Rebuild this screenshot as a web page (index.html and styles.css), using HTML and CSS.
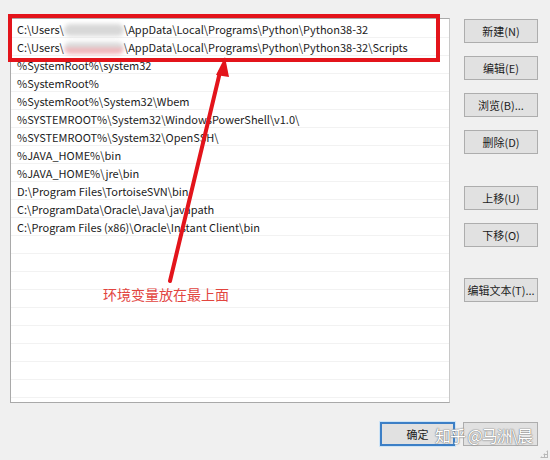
FILE: index.html
```html
<!DOCTYPE html>
<html>
<head>
<meta charset="utf-8">
<link rel="stylesheet" href="styles.css">
</head>
<body>
<div class="dialog">
  <div class="main">
    <div class="list">
      <div class="row">C:\Users\<span class="blur"></span>\AppData\Local\Programs\Python\Python38-32</div>
      <div class="row">C:\Users\<span class="blur pink"></span>\AppData\Local\Programs\Python\Python38-32\Scripts</div>
      <div class="row">%SystemRoot%\system32</div>
      <div class="row">%SystemRoot%</div>
      <div class="row">%SystemRoot%\System32\Wbem</div>
      <div class="row">%SYSTEMROOT%\System32\WindowsPowerShell\v1.0\</div>
      <div class="row">%SYSTEMROOT%\System32\OpenSSH\</div>
      <div class="row">%JAVA_HOME%\bin</div>
      <div class="row">%JAVA_HOME%\jre\bin</div>
      <div class="row">D:\Program Files\TortoiseSVN\bin</div>
      <div class="row">C:\ProgramData\Oracle\Java\javapath</div>
      <div class="row">C:\Program Files (x86)\Oracle\Instant Client\bin</div>
    </div>
    <div class="side">
      <button class="btn">新建(N)</button>
      <button class="btn">编辑(E)</button>
      <button class="btn">浏览(B)...</button>
      <button class="btn">删除(D)</button>
      <button class="btn sep">上移(U)</button>
      <button class="btn">下移(O)</button>
      <button class="btn sep2">编辑文本(T)...</button>
    </div>
  </div>
  <div class="bottom">
    <button class="btn ok">确定</button>
    <button class="btn cancel">取消</button>
  </div>
</div>
<div class="redbox"></div>
<svg class="arrow" width="550" height="460" viewBox="0 0 550 460">
  <line x1="170" y1="281" x2="220" y2="72" stroke="#e3141b" stroke-width="4" stroke-linecap="round"/>
  <polygon points="225,57 216,75 229,77" fill="#e3141b"/>
</svg>
<div class="note">环境变量放在最上面</div>
<div class="watermark">知乎 @马洲\晨</div>
<div class="grip"></div>
</body>
</html>
```
FILE: styles.css
```css
html, body {
  margin: 0;
  padding: 0;
}
body {
  width: 550px;
  height: 460px;
  background: #f0f0f0;
  font-family: "Noto Sans CJK SC", "Liberation Sans", sans-serif;
  font-size: 11px;
  color: #1c1c1c;
  position: relative;
  overflow: hidden;
}
.dialog {
  padding: 18px 12px 0 10px;
}
.main {
  display: grid;
  grid-template-columns: 440px 74px;
  column-gap: 14px;
}
.list {
  height: 382px;
  border: 1px solid #a9a9a9;
  border-right-color: #c8c8c8;
  background-color: #fff;
  background-image: repeating-linear-gradient(to bottom, transparent 0, transparent 17px, #f2f2f2 17px, #f2f2f2 18px);
  background-position: 0 1px;
  padding-top: 1px;
  box-sizing: content-box;
}
.row {
  height: 18px;
  line-height: 18px;
  padding-left: 6px;
  white-space: nowrap;
}
.blur {
  display: inline-block;
  width: 60px;
  height: 12px;
  vertical-align: -2px;
  background: #d8d8d8;
  border-radius: 6px;
  filter: blur(2px);
}
.blur.pink {
  background: linear-gradient(to bottom, #dcdcdc 0, #dcdcdc 50%, #f0b4b8 50%, #f0b4b8 100%);
}
.side {
  display: flex;
  flex-direction: column;
  padding-top: 1px;
  gap: 13px;
}
.btn {
  width: 74px;
  height: 24px;
  margin: 0;
  padding: 0;
  background: #e1e1e1;
  border: 1px solid #adadad;
  font-family: "Noto Sans CJK SC", "Liberation Sans", sans-serif;
  font-size: 11px;
  color: #1c1c1c;
  white-space: nowrap;
}
.side .sep { margin-top: 19px; }
.side .sep2 { margin-top: 18px; }
.bottom {
  display: flex;
  justify-content: flex-end;
  gap: 8px;
  margin-top: 19px;
}
.bottom .btn {
  width: 75px;
  height: 24px;
}
.ok {
  border: 2px solid #3c7fc6;
  box-shadow: 0 0 0 1px #cde4f7;
}
.cancel { color: #e1e1e1; }
.redbox {
  position: absolute;
  left: 8px;
  top: 14px;
  width: 424px;
  height: 40px;
  border: 4px solid #e3141b;
}
.arrow {
  position: absolute;
  left: 0;
  top: 0;
}
.note {
  position: absolute;
  left: 103px;
  top: 284px;
  font-size: 14px;
  color: #e2453f;
}
.watermark {
  position: absolute;
  left: 435px;
  top: 423px;
  font-size: 16px;
  letter-spacing: -1px;
  color: #fff;
  text-shadow: 0 0 1px #777, 0 0 1px #777, 0 0 2px #aaa;
  white-space: nowrap;
}
.grip {
  position: absolute;
  right: 2px;
  bottom: 2px;
  width: 8px;
  height: 8px;
  background: radial-gradient(circle, #b8b8b8 1px, transparent 1.2px) 0 0 / 3px 3px;
  clip-path: polygon(100% 0, 100% 100%, 0 100%);
}
```
